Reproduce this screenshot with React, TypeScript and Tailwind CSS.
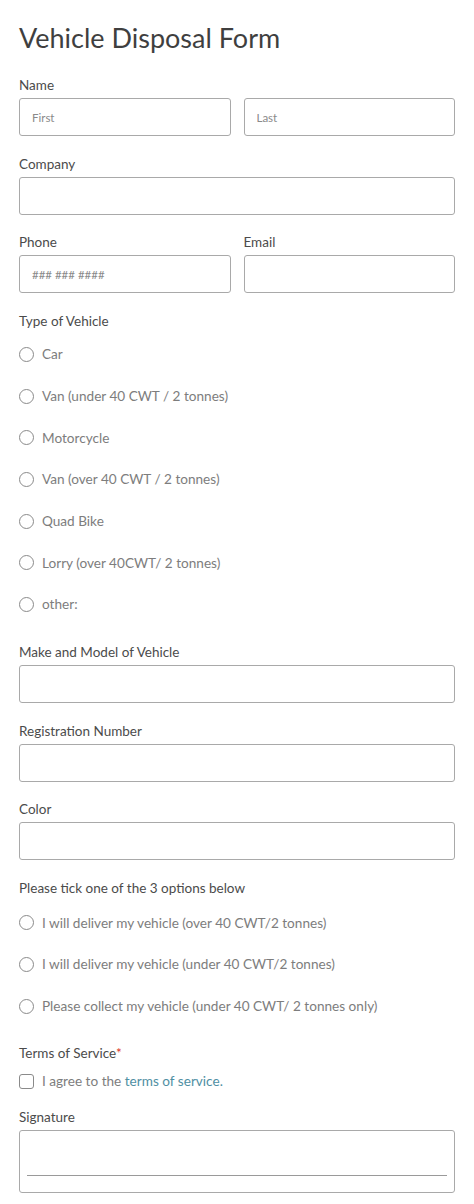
import React from "react";

const vehicleTypes = [
  "Car",
  "Van (under 40 CWT / 2 tonnes)",
  "Motorcycle",
  "Van (over 40 CWT / 2 tonnes)",
  "Quad Bike",
  "Lorry (over 40CWT/ 2 tonnes)",
  "other:",
];

const deliveryOptions = [
  "I will deliver my vehicle (over 40 CWT/2 tonnes)",
  "I will deliver my vehicle (under 40 CWT/2 tonnes)",
  "Please collect my vehicle (under 40 CWT/ 2 tonnes only)",
];

function Label({ children }: { children: React.ReactNode }) {
  return <div className="h-[18px] text-[13.5px] leading-[18px] text-[#4b4b4b]">{children}</div>;
}

function Input({ placeholder }: { placeholder?: string }) {
  return (
    <input
      placeholder={placeholder}
      className="mt-1 h-[38px] w-full rounded-[3px] border border-[#a9a9a9] bg-white px-3 text-[11.5px] text-[#555] placeholder:text-[#8a8a8a] outline-none"
    />
  );
}

function Radio({ label }: { label: string }) {
  return (
    <label className="flex h-[41.67px] items-center gap-2 text-[13.6px] text-[#7d7d7d]">
      <span className="h-[15px] w-[15px] shrink-0 rounded-full border border-[#8a8a8a]" />
      {label}
    </label>
  );
}

export default function App() {
  return (
    <div className="min-h-[1204px] bg-white px-[19px] pb-3 pt-[22px] font-['Lato',sans-serif]">
      <h1 className="h-[32px] text-[27px] leading-[32px] text-[#3f3f3f]">Vehicle Disposal Form</h1>

      <div className="mt-[22px]">
        <Label>Name</Label>
        <div className="grid grid-cols-2 gap-[13px]">
          <Input placeholder="First" />
          <Input placeholder="Last" />
        </div>
      </div>

      <div className="mt-[18.6px]">
        <Label>Company</Label>
        <Input />
      </div>

      <div className="mt-[18.6px] grid grid-cols-2 gap-[13px]">
        <div>
          <Label>Phone</Label>
          <Input placeholder="### ### ####" />
        </div>
        <div>
          <Label>Email</Label>
          <Input />
        </div>
      </div>

      <div className="mt-[18.6px]">
        <Label>Type of Vehicle</Label>
        <div className="mt-[4px] flex flex-col">
          {vehicleTypes.map((v) => (
            <Radio key={v} label={v} />
          ))}
        </div>
      </div>

      <div className="mt-[18px]">
        <Label>Make and Model of Vehicle</Label>
        <Input />
      </div>

      <div className="mt-[18.5px]">
        <Label>Registration Number</Label>
        <Input />
      </div>

      <div className="mt-[18.5px]">
        <Label>Color</Label>
        <Input />
      </div>

      <div className="mt-[18.5px]">
        <Label>Please tick one of the 3 options below</Label>
        <div className="mt-[5px] flex flex-col">
          {deliveryOptions.map((v) => (
            <Radio key={v} label={v} />
          ))}
        </div>
      </div>

      <div className="mt-[17.5px]">
        <Label>
          Terms of Service<span className="text-[#d93025]">*</span>
        </Label>
        <label className="mt-[9px] flex h-[20px] items-center gap-2 text-[13.6px] text-[#7d7d7d]">
          <span className="h-[15px] w-[15px] shrink-0 rounded-[3px] border border-[#8a8a8a]" />
          <span>
            I agree to the <span className="text-[#4f8fa3]">terms of service.</span>
          </span>
        </label>
      </div>

      <div className="mt-[17px]">
        <Label>Signature</Label>
        <div className="mt-1 flex h-[63px] flex-col justify-end rounded-[3px] border border-[#a9a9a9] px-[7px] pb-[16px]">
          <div className="h-px bg-[#9a9a9a]" />
        </div>
      </div>
    </div>
  );
}
